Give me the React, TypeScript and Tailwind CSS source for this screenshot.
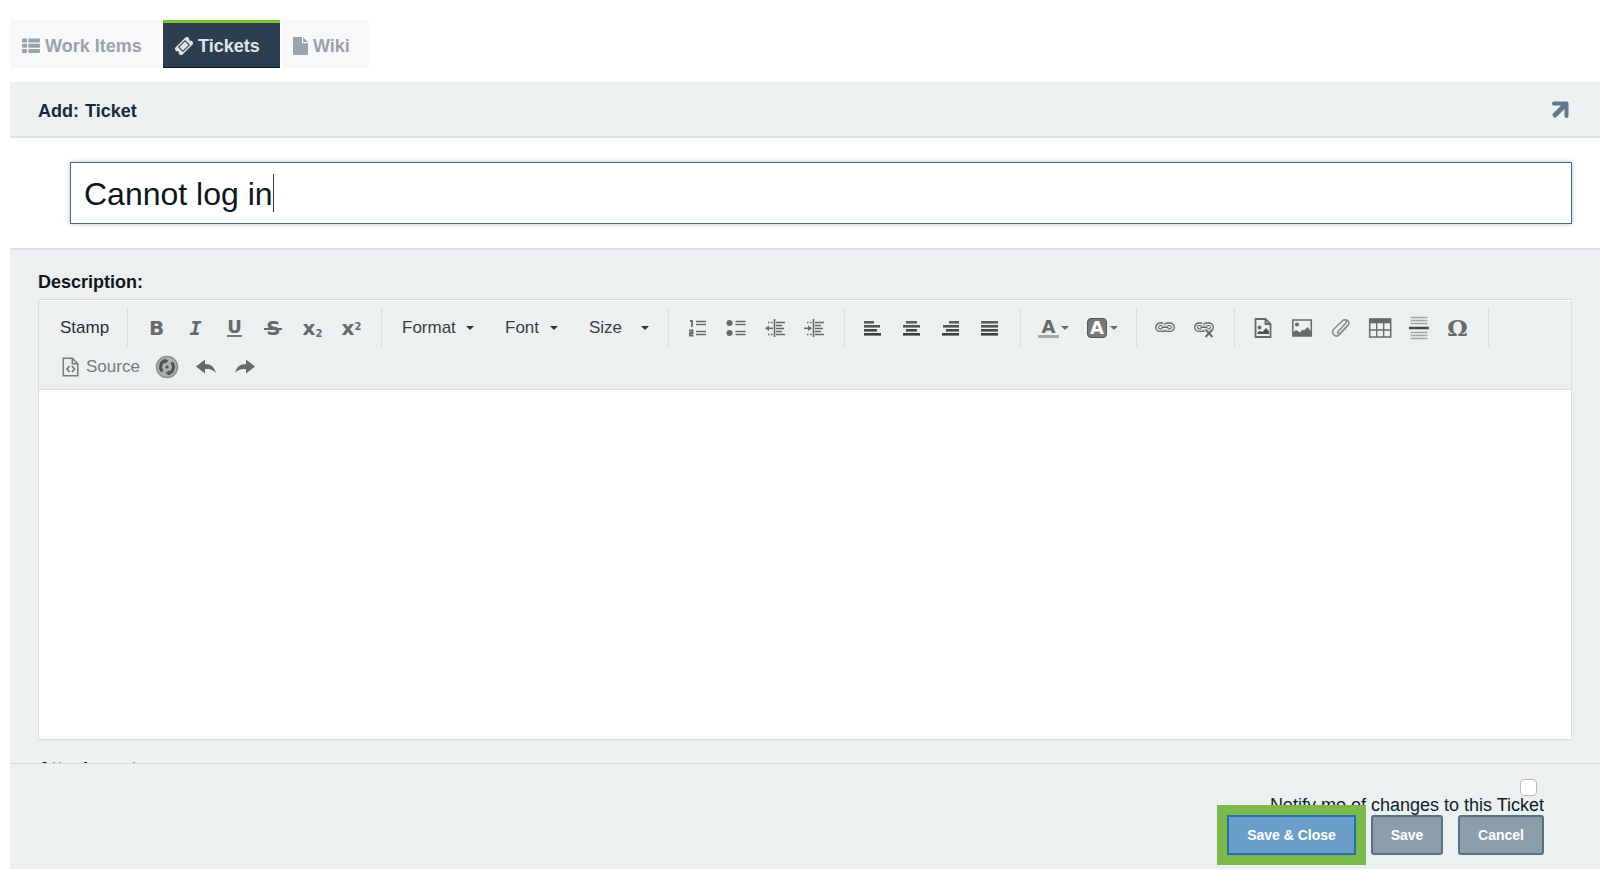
import type { ReactNode } from "react";

const tabClass =
  "flex h-12 items-center gap-[5px] bg-[#f7f8fa] text-lg font-bold text-[#98a3ad]";

const Group = ({ children }: { children: ReactNode }) => (
  <div className="flex h-[39px] items-center border-r border-[#d3dedf] pr-[11px] pl-2">
    {children}
  </div>
);

const Tool = ({ label, children }: { label: string; children: ReactNode }) => (
  <button
    type="button"
    aria-label={label}
    title={label}
    className="flex h-[39px] w-[39px] items-center justify-center text-[#666a6b]"
  >
    {children}
  </button>
);

const Icon = ({ children }: { children: ReactNode }) => (
  <svg
    width="24"
    height="24"
    viewBox="0 0 24 24"
    fill="none"
    stroke="currentColor"
    strokeWidth="1.5"
  >
    {children}
  </svg>
);

const Caret = ({ className }: { className: string }) => (
  <svg width="8" height="4" viewBox="0 0 8 4" className={className}>
    <path d="M0 0h8L4 4z" fill="currentColor" />
  </svg>
);

const Combo = ({ name, className }: { name: string; className: string }) => (
  <div className={`relative flex h-[39px] items-center ${className}`}>
    <select
      aria-label={name}
      className="w-full appearance-none bg-transparent text-[17px] text-[#3b3e3f]"
    >
      <option>{name}</option>
    </select>
    <Caret className="pointer-events-none absolute right-0 text-[#333]" />
  </div>
);

// each row is [x, width]
const Align = ({ rows }: { rows: number[][] }) => (
  <svg width="18" height="16" viewBox="0 0 18 16" fill="#3d3f40">
    {rows.map(([x, width], i) => (
      <rect
        key={i}
        x={x}
        y={i * 4 + 1}
        width={width}
        height="2.6"
        opacity={0.82 + i * 0.06}
      />
    ))}
  </svg>
);

const IndentLines = () => (
  <>
    <path d="M11.5 3v18" strokeWidth="1.6" />
    <path d="M13 6.5h9M13 9.5h6M13 12.5h8M13 15.5h6M13 18.5h9" />
    <path d="M5 6.5h5M5 18.5h5" strokeDasharray="1.5 1.5" strokeWidth="1.3" />
  </>
);

const Chain = () => (
  <>
    <path
      d="M10.5 7.3A4.2 4.2 0 0 0 9 7H7a4.2 4.2 0 0 0 0 8.4h2.5a4.2 4.2 0 0 0 2.5-.8 4.2 4.2 0 0 0 2.5.8H17A4.2 4.2 0 0 0 17 7h-2.5a4.2 4.2 0 0 0-2.5.8"
      strokeWidth="1.4"
    />
    <path
      d="M9.5 9.5H7.3a1.7 1.7 0 0 0 0 3.4h2.2M14.5 9.5h2.2a1.7 1.7 0 0 1 0 3.4h-2.2M12 7.5v2"
      strokeWidth="1.1"
    />
    <path d="M8.5 11.2h7" strokeWidth="1.6" />
  </>
);

const Tabs = () => (
  <nav className="flex gap-[2px]">
    <a href="#work-items" className={`${tabClass} w-[151px] pt-1 pl-3`}>
      <svg width="18" height="16" viewBox="0 0 18 16" fill="currentColor">
        <rect y="0.5" width="5" height="4" rx="1" />
        <rect y="5.8" width="5" height="4" rx="1" />
        <rect y="11.1" width="5" height="4" rx="1" />
        <rect x="6.3" y="0.5" width="11.7" height="4" rx="1" />
        <rect x="6.3" y="5.8" width="11.7" height="4" rx="1" />
        <rect x="6.3" y="11.1" width="11.7" height="4" rx="1" />
      </svg>
      Work Items
    </a>
    <a
      href="#tickets"
      aria-current="page"
      className="flex h-12 w-[117px] items-center gap-[5px] border-t-[3px] border-b border-t-[#7bc22f] border-b-[#0b1b2e] bg-[#2c3e50] pt-[2px] pl-3 text-lg font-bold text-[#e0e6e8]"
    >
      <svg width="18" height="18" viewBox="0 0 18 18">
        <g transform="rotate(-45 9 9)">
          <path
            d="M0.5 4.5h17v2.9a1.7 1.7 0 0 0 0 3.2v2.9h-17v-2.9a1.7 1.7 0 0 0 0-3.2z"
            fill="currentColor"
            stroke="currentColor"
            strokeLinejoin="round"
          />
          <rect
            x="4.5"
            y="6"
            width="9"
            height="6"
            fill="none"
            stroke="#2c3e50"
            strokeWidth="1"
          />
        </g>
      </svg>
      Tickets
    </a>
    <a href="#wiki" className={`${tabClass} w-[87px] pt-1 pl-[11px]`}>
      <svg width="15" height="18" viewBox="0 0 15 18" fill="currentColor">
        <path d="M0 1a1 1 0 0 1 1-1h8v5.2a1 1 0 0 0 1 1h5V17a1 1 0 0 1-1 1H1a1 1 0 0 1-1-1zM10.2 0.2 14.8 5h-4.6z" />
      </svg>
      Wiki
    </a>
  </nav>
);

const Toolbar = () => (
  <div className="border-t border-b border-t-white border-b-[#d3dedf] bg-[#ecf0f1] pt-[7px] pb-[3px]">
    <div className="flex">
      <div className="flex h-[39px] w-[89px] items-center border-r border-[#d3dedf] pl-[21px]">
        <button type="button" className="text-[17px] text-[#2b2e30]">
          Stamp
        </button>
      </div>
      <div className="flex h-[39px] items-center border-r border-[#d3dedf] pr-[10px] pl-[9px]">
        <Tool label="Bold">
          <span className="font-['DejaVu_Sans'] text-xl font-bold">B</span>
        </Tool>
        <Tool label="Italic">
          <span className="font-['DejaVu_Sans_Mono'] text-xl font-bold italic">
            I
          </span>
        </Tool>
        <Tool label="Underline">
          <span className="border-b-2 border-[#77797a] font-['DejaVu_Sans'] text-lg leading-[17px] font-bold">
            U
          </span>
        </Tool>
        <Tool label="Strikethrough">
          <span className="relative font-['DejaVu_Sans'] text-xl font-bold">
            S
            <span className="absolute top-[14px] -left-[2px] h-[2px] w-[18px] bg-[#666a6b]" />
          </span>
        </Tool>
        <Tool label="Subscript">
          <span className="font-['DejaVu_Sans'] text-xl leading-none font-bold">
            x<sub className="text-[10px]">2</sub>
          </span>
        </Tool>
        <Tool label="Superscript">
          <span className="font-['DejaVu_Sans'] text-xl leading-none font-bold">
            x<sup className="text-[10px]">2</sup>
          </span>
        </Tool>
      </div>
      <div className="flex h-[39px] w-[287px] items-center border-r border-[#d3dedf] pl-[20px]">
        <Combo name="Format" className="w-[72px]" />
        <Combo name="Font" className="ml-[31px] w-[53px]" />
        <Combo name="Size" className="ml-[31px] w-[60px]" />
      </div>
      <Group>
        <Tool label="Insert/Remove Numbered List">
          <Icon>
            <path d="M5 5h2v6M4 14.5h3.5V17H5v2.5h3.5" strokeWidth="1.8" />
            <path d="M11 5.5h10M11 8.5h10M11 15.5h10M11 18.5h10" />
          </Icon>
        </Tool>
        <Tool label="Insert/Remove Bulleted List">
          <Icon>
            <circle cx="5.5" cy="7" r="3" fill="currentColor" stroke="none" />
            <circle cx="5.5" cy="17" r="3" fill="currentColor" stroke="none" />
            <path d="M11.5 5.5h10M11.5 8.5h10M11.5 15.5h10M11.5 18.5h10" />
          </Icon>
        </Tool>
        <Tool label="Decrease Indent">
          <Icon>
            <IndentLines />
            <path d="M5 12.3h5" />
            <path d="M2 12.3 6 9.5v5.6z" fill="currentColor" stroke="none" />
          </Icon>
        </Tool>
        <Tool label="Increase Indent">
          <Icon>
            <IndentLines />
            <path d="M2 12.3h5" />
            <path d="M10 12.3 6 9.5v5.6z" fill="currentColor" stroke="none" />
          </Icon>
        </Tool>
      </Group>
      <Group>
        <Tool label="Align Left">
          <Align rows={[[0, 10], [0, 16], [0, 13], [0, 17]]} />
        </Tool>
        <Tool label="Center">
          <Align rows={[[3, 11], [0, 17], [3, 11], [0, 17]]} />
        </Tool>
        <Tool label="Align Right">
          <Align rows={[[7, 10], [1, 16], [4, 13], [0, 17]]} />
        </Tool>
        <Tool label="Justify">
          <Align rows={[[0, 17], [0, 17], [0, 17], [0, 17]]} />
        </Tool>
      </Group>
      <div className="flex h-[39px] w-[116px] items-center gap-[18px] border-r border-[#d3dedf] pl-[17px] text-[#666a6b]">
        <button
          type="button"
          aria-label="Text Color"
          className="flex items-center gap-[2px]"
        >
          <span className="w-[21px] border-b-[3px] border-[#a6a9aa] text-center font-['DejaVu_Sans'] text-lg leading-[17px] font-bold">
            A
          </span>
          <Caret className="" />
        </button>
        <button
          type="button"
          aria-label="Background Color"
          className="flex items-center gap-[3px]"
        >
          <span className="h-5 w-5 rounded-[4px] border border-[#555] bg-[#77797a] text-center font-['DejaVu_Sans'] text-lg leading-[18px] font-bold text-white">
            A
          </span>
          <Caret className="" />
        </button>
      </div>
      <Group>
        <Tool label="Link">
          <Icon>
            <Chain />
          </Icon>
        </Tool>
        <Tool label="Unlink">
          <Icon>
            <Chain />
            <path
              d="m13.5 13.5 7 7.5m0-7.5-7 7.5"
              stroke="#ecf0f1"
              strokeWidth="4"
            />
            <path d="m13.5 13.5 7 7.5m0-7.5-7 7.5" strokeWidth="2" />
          </Icon>
        </Tool>
      </Group>
      <Group>
        <Tool label="Insert Image">
          <Icon>
            <path d="M4.5 3h10l5 5v13h-15zM14.5 3v5h5" strokeWidth="1.8" />
            <circle cx="8.5" cy="11.5" r="1.9" fill="currentColor" stroke="none" />
            <path
              d="M6.5 18v-2l3-1 2 1 3.5-4 3 3.5V18z"
              fill="#4c4f50"
              stroke="none"
            />
          </Icon>
        </Tool>
        <Tool label="Image">
          <Icon>
            <rect x="2.8" y="4" width="18.5" height="16" />
            <circle cx="7" cy="8.5" r="2.1" fill="currentColor" stroke="none" />
            <path
              d="M3 20v-3.5L6 14l4 2.500 2.500-3 1.500 1 3.500-3.500 3.500 4.500V20z"
              fill="currentColor"
              stroke="none"
            />
          </Icon>
        </Tool>
        <Tool label="Attach File">
          <Icon>
            <path
              d="m18 10-7 7.5c-1.2 1.2-3.3-.5-2-2l7.5-8c2.3-2.5-.8-5-3-2.8L5 13c-3.8 4.2 1.5 9.5 5.500 5.500l8-8.500c3-3.500.5-7-3-6"
              stroke="#85898a"
            />
          </Icon>
        </Tool>
        <Tool label="Table">
          <Icon>
            <rect x="1.7" y="3" width="21" height="18" />
            <path d="M1.7 5h21" strokeWidth="4.5" />
            <path d="M2 14h20.5M8.7 6v15M15.7 6v15" strokeWidth="1.3" />
          </Icon>
        </Tool>
        <Tool label="Insert Horizontal Line">
          <Icon>
            <path
              d="M3.5 1.5h17M3.5 4.5h17M3.5 7.5h17M3.5 16.5h17M3.5 19.5h17M3.5 22.5h17"
              stroke="#a3a7a8"
              strokeWidth="1.3"
            />
            <path d="M2 12h20" stroke="#484b4c" strokeWidth="2.5" />
          </Icon>
        </Tool>
        <Tool label="Insert Special Character">
          <span className="font-['DejaVu_Serif'] text-[23px] leading-none font-bold">
            Ω
          </span>
        </Tool>
      </Group>
    </div>
    <div className="flex h-[39px] items-center pl-5">
      <button
        type="button"
        className="flex w-[88px] items-center gap-[3px] text-[17px] text-[#77797b]"
      >
        <Icon>
          <path d="M4.3 3.2h9l5.5 5.5v12.1H4.3zM13.3 3.2v5.5h5.5" />
          <path d="M10.5 11 8 14l2.5 3M13 11l2.5 3-2.5 3" strokeWidth="1.8" />
        </Icon>
        Source
      </button>
      <Tool label="Templates">
        <Icon>
          <circle cx="12" cy="12" r="10.5" fill="#adb0b1" stroke="#8d9091" />
          <path
            d="M10.5 5.5A6.5 6.5 0 0 0 7.5 16.5M13.5 18.5A6.5 6.5 0 0 0 16.5 7.5"
            stroke="#515455"
            strokeWidth="3"
          />
          <path
            d="m9 3.5 4.5 2L10 9zM15 20.5l-4.5-2L14 15z"
            fill="#515455"
            stroke="none"
          />
          <circle cx="12" cy="12" r="1.6" fill="#515455" stroke="none" />
        </Icon>
      </Tool>
      <Tool label="Undo">
        <Icon>
          <path
            d="M2 11.5 11 4.5V9c6 0 9.5 3 11 9-3-3.500-6-4-11-4v4.500z"
            fill="currentColor"
            stroke="none"
          />
        </Icon>
      </Tool>
      <Tool label="Redo">
        <Icon>
          <path
            d="M22 11.5 13 4.5V9c-6 0-9.5 3-11 9 3-3.500 6-4 11-4v4.500z"
            fill="currentColor"
            stroke="none"
          />
        </Icon>
      </Tool>
    </div>
  </div>
);

const grayButton =
  "h-10 rounded-[3px] border-2 border-[#547286] bg-[#8a9da8] text-sm font-bold text-white";

const Footer = () => (
  <footer className="flex flex-col items-end border-t border-[#d3dedf] pt-[15px] pr-14 pb-[14px]">
    <label className="flex flex-col items-end text-lg leading-[18px] text-[#101c2b]">
      <input
        type="checkbox"
        className="mr-[7px] h-[17px] w-[17px] appearance-none rounded-[4px] border border-[#b9bdbf] bg-white"
      />
      <span>Notify me of changes to this Ticket</span>
    </label>
    <div className="relative mt-px flex gap-[15px]">
      <button
        type="button"
        className="h-10 w-[129px] border-2 border-[#2271b5] bg-[#6b9fca] text-sm font-bold text-white outline-[10px] outline-[#7ab94a] outline-solid"
      >
        Save &amp; Close
      </button>
      <button type="button" className={`${grayButton} w-[72px]`}>
        Save
      </button>
      <button type="button" className={`${grayButton} w-[86px]`}>
        Cancel
      </button>
    </div>
  </footer>
);

const App = () => {
  return (
    <div className="bg-white pt-5 pl-[10px] font-['Liberation_Sans',Arial,sans-serif]">
      <Tabs />
      <main className="mt-[14px] bg-[#ecf0f1]">
        <header className="flex h-14 items-center justify-between border-b-2 border-[#dbe4e5] pr-[30px] pl-7">
          <h1 className="flex gap-[6px] pt-[3px] text-lg font-bold text-[#142a42]">
            <span>Add:</span>
            <span>Ticket</span>
          </h1>
          <button type="button" aria-label="Open in new window">
            <svg
              width="19"
              height="19"
              viewBox="0 0 19 19"
              fill="none"
              stroke="#5f7b8a"
              strokeWidth="4"
              strokeLinecap="round"
              strokeLinejoin="round"
            >
              <path d="M3 3.5h12.5V16" />
              <path d="M14.5 4.5 4 15" strokeWidth="5" />
            </svg>
          </button>
        </header>
        <div className="bg-white pt-6 pr-7 pb-6 pl-[60px]">
          <div className="relative">
            <input
              type="text"
              aria-label="Ticket title"
              defaultValue="Cannot log in"
              className="block h-[62px] w-full border border-[#456b82] bg-white px-[13px] pt-[2px] text-[32px] text-[#0c1622] shadow-[0_0_5px_#b5c6cf] outline-none"
            />
            <span className="absolute top-3 left-[203px] h-[38px] w-px bg-[#333]" />
          </div>
        </div>
        <section className="border-t-2 border-[#dbe4e5] px-7 pt-[19px]">
          <label
            htmlFor="description"
            className="block text-lg leading-[27px] font-bold text-[#101720]"
          >
            Description:
          </label>
          <div className="mt-[3px] border border-[#d3dedf]">
            <Toolbar />
            <textarea
              id="description"
              className="block h-[349px] w-full resize-none bg-white p-4 outline-none"
            />
          </div>
          <div className="mt-[21px] h-[2px] overflow-hidden">
            <h2 className="text-lg leading-[17px] font-bold text-[#101720]">
              Attachments:
            </h2>
          </div>
        </section>
        <Footer />
      </main>
    </div>
  );
};

export default App;
